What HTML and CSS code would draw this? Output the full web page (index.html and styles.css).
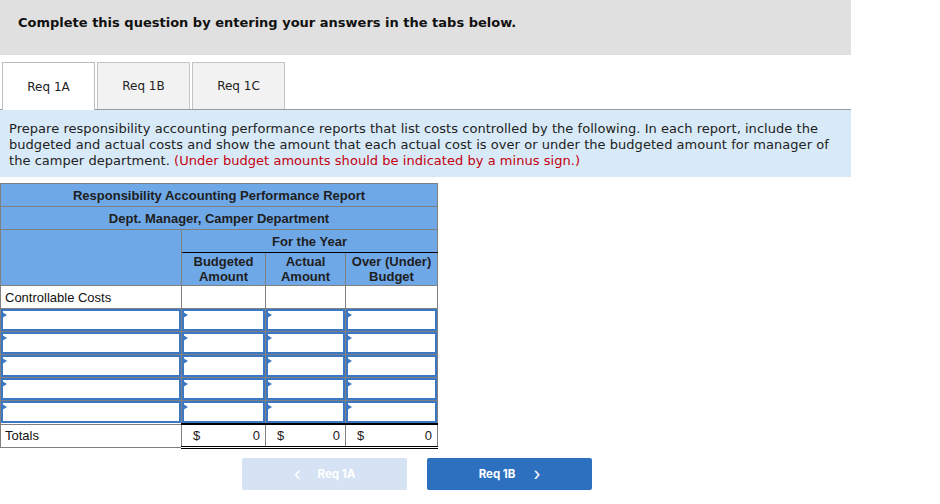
FILE: index.html
```html
<!DOCTYPE html>
<html>
<head>
<meta charset="utf-8">
<link rel="stylesheet" href="styles.css">
</head>
<body>
<div class="page">
  <div class="banner">Complete this question by entering your answers in the tabs below.</div>
  <div class="tabs">
    <div class="tab active">Req 1A</div>
    <div class="tab">Req 1B</div>
    <div class="tab">Req 1C</div>
  </div>
  <div class="instructions">Prepare responsibility accounting performance reports that list costs controlled by the following. In each report, include the budgeted and actual costs and show the amount that each actual cost is over or under the budgeted amount for manager of the camper department. <span class="red">(Under budget amounts should be indicated by a minus sign.)</span></div>

  <table class="report">
    <colgroup>
      <col class="c1"><col class="c2"><col class="c3"><col class="c4">
    </colgroup>
    <tr class="hrow"><th colspan="4">Responsibility Accounting Performance Report</th></tr>
    <tr class="hrow"><th colspan="4">Dept. Manager, Camper Department</th></tr>
    <tr class="hrow"><th rowspan="2"></th><th colspan="3" class="year">For the Year</th></tr>
    <tr class="hrow2"><th>Budgeted<br>Amount</th><th>Actual<br>Amount</th><th>Over (Under)<br>Budget</th></tr>
    <tr class="row"><td class="label">Controllable Costs</td><td></td><td></td><td></td></tr>
    <tr class="irow"><td><div class="inp"></div></td><td><div class="inp"></div></td><td><div class="inp"></div></td><td><div class="inp"></div></td></tr>
    <tr class="irow"><td><div class="inp"></div></td><td><div class="inp"></div></td><td><div class="inp"></div></td><td><div class="inp"></div></td></tr>
    <tr class="irow"><td><div class="inp"></div></td><td><div class="inp"></div></td><td><div class="inp"></div></td><td><div class="inp"></div></td></tr>
    <tr class="irow"><td><div class="inp"></div></td><td><div class="inp"></div></td><td><div class="inp"></div></td><td><div class="inp"></div></td></tr>
    <tr class="irow"><td><div class="inp"></div></td><td><div class="inp"></div></td><td><div class="inp"></div></td><td><div class="inp"></div></td></tr>
    <tr class="row total"><td class="label">Totals</td>
      <td class="amt"><span>$</span><span>0</span></td>
      <td class="amt"><span>$</span><span>0</span></td>
      <td class="amt"><span>$</span><span>0</span></td>
    </tr>
  </table>

  <div class="nav">
    <button class="btn prev"><span class="chev">&lsaquo;</span>Req 1A</button>
    <button class="btn next">Req 1B<span class="chev">&rsaquo;</span></button>
  </div>
</div>
</body>
</html>
```

FILE: styles.css
```css
html, body { margin: 0; padding: 0; background: #fff; }
body { font-family: "DejaVu Sans", Verdana, sans-serif; color: #1a1a1a; }
.page { width: 851px; }

.banner {
  background: #e0e0e0;
  height: 55px;
  box-sizing: border-box;
  padding: 15px 0 0 18px;
  font-weight: bold;
  font-size: 13px;
  line-height: 16px;
  color: #111;
}

.tabs {
  display: flex;
  gap: 2px;
  margin-top: 7px;
  padding-left: 2px;
  border-bottom: 1px solid #9a9a9a;
  height: 47px;
}
.tab {
  width: 93px;
  box-sizing: border-box;
  height: 47px;
  border: 1px solid #c4c4c4;
  border-bottom: none;
  background: #f2f2f2;
  font-size: 12px;
  display: flex;
  align-items: center;
  justify-content: center;
  color: #222;
}
.tab.active {
  background: #fff;
  height: 48px;
  border-color: #bdbdbd;
}

.instructions {
  background: #d8eaf8;
  padding: 11px 10px 8px 9px;
  font-size: 13px;
  line-height: 16px;
  letter-spacing: 0.04px;
  color: #222;
}
.red { color: #c5000f; }

.report {
  margin-top: 6px;
  border-collapse: collapse;
  font-family: "Liberation Sans", Arial, sans-serif;
  font-size: 13px;
  table-layout: fixed;
  width: 438px;
}
.c1 { width: 181px; }
.c2 { width: 84px; }
.c3 { width: 80px; }
.c4 { width: 92px; }
.report th, .report td {
  border: 1px solid #808080;
  padding: 0;
}
.report th {
  background: #6fa8e7;
  font-weight: bold;
  color: #1e1e1e;
  height: 22px;
  text-align: center;
}
.report th.year { border-bottom: 1px solid #000; }
.hrow2 th { height: 32px; line-height: 15px; }
.row td { height: 22px; }
.label { padding-left: 4px !important; color: #111; }
.irow td { height: 22px; padding: 0; }
.inp {
  position: relative;
  height: 22px;
  box-sizing: border-box;
  border: 2px solid #3a77c4;
}
.inp::before {
  content: "";
  position: absolute;
  left: -1px;
  top: 1px;
  border-left: 5px solid #3a77c4;
  border-top: 3px solid transparent;
  border-bottom: 3px solid transparent;
}
.total td { height: 21px; }
.total td.amt {
  border-top: 2px solid #000;
  border-bottom: 3px double #000;
}
.amt span:first-child { float: left; padding-left: 11px; }
.amt span:last-child { float: right; padding-right: 5px; }

.nav {
  display: flex;
  gap: 20px;
  margin: 9px 0 0 242px;
}
.btn {
  width: 165px;
  height: 32px;
  border: none;
  border-radius: 2px;
  font-family: "Inter", "Roboto", sans-serif;
  font-weight: bold;
  font-size: 11.5px;
  color: #fff;
  display: flex;
  align-items: center;
  justify-content: center;
}
.prev { background: #d6e3f4; }
.next { background: #2e70c0; }
.chev { font-size: 18px; font-weight: normal; line-height: 1; }
.prev .chev { margin-right: 17px; }
.next .chev { margin-left: 18px; }
```
